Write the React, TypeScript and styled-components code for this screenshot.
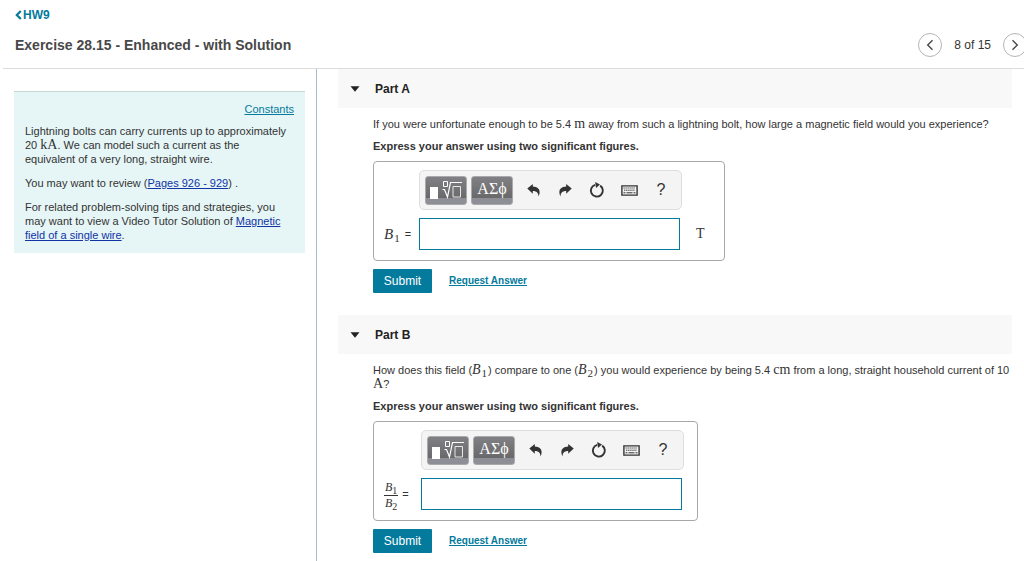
import React from "react";
import styled, { createGlobalStyle } from "styled-components";

const GlobalStyle = createGlobalStyle`
  *, *::before, *::after { box-sizing: border-box; }
  body {
    margin: 0;
    background: #fff;
    color: #333;
    font: 11px/14px "Liberation Sans", Arial, sans-serif;
  }
  p, h1, h2 { margin: 0; }
  button { font-family: inherit; cursor: pointer; }
`;

const Page = styled.div`
  min-height: 100vh;
  display: flex;
  flex-direction: column;
`;

const Header = styled.header`
  margin-left: 3px;
  padding: 8px 0 11px 12px;
  border-bottom: 1px solid #dcdcdc;
  overflow: hidden;
`;

const BackLink = styled.a`
  display: inline-flex;
  align-items: center;
  gap: 1px;
  color: #047a9c;
  font-size: 12px;
  font-weight: bold;
  text-decoration: none;
`;

const TitleRow = styled.div`
  display: flex;
  align-items: center;
  justify-content: space-between;
  margin-top: 10px;
`;

const Title = styled.h1`
  color: #484848;
  font-size: 14px;
  line-height: 24px;
`;

const Pager = styled.nav`
  display: flex;
  align-items: center;
  gap: 12px;
  margin-right: -3px;
  font-size: 12px;
`;

const PageButton = styled.button`
  display: flex;
  align-items: center;
  justify-content: center;
  width: 24px;
  height: 24px;
  padding: 0;
  border: 1px solid #b5b5b5;
  border-radius: 50%;
  background: #fff;
  color: #484848;
`;

const Body = styled.div`
  flex: 1;
  display: flex;
`;

const Sidebar = styled.aside`
  flex: 0 0 317px;
  padding: 22px 11px 22px 14px;
  border-right: 1px solid #a6bcd0;
`;

const Problem = styled.section`
  display: flex;
  flex-direction: column;
  gap: 10px;
  padding: 10px 11px 11px;
  border-top: 1px solid #c9d6d6;
  background: #e6f6f7;
  & p { padding-right: 6px; }
`;

const ConstantsLink = styled.a`
  align-self: flex-end;
  margin-bottom: -2px;
  color: #047a9c;
`;

const TextLink = styled.a`
  color: #1033a6;
`;

const Main = styled.main`
  flex: 1;
  min-width: 0;
  padding: 0 12px 0 21px;
`;

const Part = styled.section`
  padding-bottom: 22px;
  &:last-child { padding-bottom: 8px; }
`;

const PartHeader = styled.h2`
  display: flex;
  align-items: center;
  gap: 15px;
  height: 39px;
  padding-left: 12px;
  background: #f8f8f8;
  color: #222;
  font-size: 12px;
`;

const PartContent = styled.div`
  display: flex;
  flex-direction: column;
  align-items: flex-start;
  gap: 8px;
  padding: 9px 0 0 35px;
`;

const Question = styled.p`
  margin-right: -3px;
`;

const Instruction = styled.p`
  font-weight: bold;
`;

const Roman = styled.span`
  font-family: "Liberation Serif", "Times New Roman", serif;
  font-size: 14px;
  line-height: 12px;
`;

const Variable = styled(Roman)`
  font-style: italic;
  & sub {
    margin: 0 1px;
    font-size: 11px;
    font-style: normal;
    line-height: 1px;
    vertical-align: -3px;
  }
`;

const AnswerBox = styled.div<{ $labelWidth: number }>`
  display: grid;
  grid-template-columns: ${(p) => p.$labelWidth}px 263px auto;
  row-gap: 8px;
  align-items: center;
  padding: 8px 13px 10px 10px;
  border: 1px solid #a8a8a8;
  border-radius: 4px;
`;

const Toolbar = styled.div`
  grid-column: 2;
  display: flex;
  align-items: center;
  height: 40px;
  padding: 0 4px 0 5px;
  border: 1px solid #dedede;
  border-radius: 5px;
  background: #f4f4f4;
`;

const PaletteButton = styled.button`
  display: flex;
  align-items: center;
  justify-content: center;
  width: 42px;
  height: 29px;
  margin-right: 4px;
  padding: 0 0 2px;
  border: 1px solid #a9a9ac;
  border-radius: 3px;
  background: linear-gradient(#818185, #69696b 78%, #8e8e96 79%, #8e8e96);
  color: #fff;
  font: 16px/20px "Liberation Serif", "Times New Roman", serif;
`;

const ToolButton = styled.button`
  display: flex;
  align-items: center;
  justify-content: center;
  width: 32px;
  height: 28px;
  padding: 0;
  border: 0;
  background: none;
  color: #333;
  font-size: 16px;
`;

const AnswerLabel = styled.label`
  grid-column: 1;
  display: flex;
  align-items: center;
  gap: 4px;
`;

const LabelMath = styled(Variable)`
  font-size: 15px;
`;

const Fraction = styled.span`
  display: inline-flex;
  flex-direction: column;
  align-items: center;
  gap: 1px;
  & ${Variable} { font-size: 12px; }
  & sub { margin: 0; font-size: 10px; }
`;

const Numerator = styled.span`
  padding: 0 1px 1px;
  border-bottom: 1px solid #333;
`;

const AnswerInput = styled.input`
  width: 261px;
  height: 32px;
  padding: 0 6px;
  border: 1px solid #047a9c;
  background: #fff;
  font-size: 14px;
`;

const Unit = styled(Roman)`
  padding: 0 6px 0 14px;
`;

const Actions = styled.div`
  display: flex;
  align-items: center;
  gap: 17px;
`;

const SubmitButton = styled.button`
  width: 59px;
  height: 24px;
  padding: 0;
  border: 0;
  border-radius: 1px;
  background: #047a9c;
  color: #fff;
  font-size: 12px;
`;

const RequestLink = styled.a`
  color: #047a9c;
  font-size: 10px;
  font-weight: bold;
`;

const Chevron = ({ flip = false }: { flip?: boolean }) => (
  <svg width="8" height="12" viewBox="0 0 8 12" fill="none" stroke="currentColor" strokeWidth="1.4" aria-hidden="true">
    <path d={flip ? "M1.5 1.2 6.3 6 1.5 10.8" : "M6.5 1.2 1.7 6 6.5 10.8"} />
  </svg>
);

const BackIcon = () => (
  <svg width="7" height="10" viewBox="0 0 7 10" fill="none" stroke="currentColor" strokeWidth="2.2" aria-hidden="true">
    <path d="M5.8 .9 1.8 5l4 4.1" />
  </svg>
);

const CaretIcon = () => (
  <svg width="10" height="6" viewBox="0 0 10 6" aria-hidden="true">
    <path d="M.5 .3h9L5 5.7Z" fill="#222" />
  </svg>
);

const TemplateIcon = () => (
  <svg width="34" height="20" viewBox="0 0 34 20" fill="none" stroke="#fff" aria-hidden="true">
    <rect x="1" y="8" width="8" height="12" fill="#fff" stroke="none" />
    <path d="M14.5 2.5h4v5h-4z" />
    <path d="M13.5 10.5h2l3 7.5L21.5 3.5H33" strokeWidth="1.2" />
    <path d="M24 7.5h7.5v10.5H24z" stroke="#e6e6e6" />
  </svg>
);

const ArrowIcon = ({ flip = false }: { flip?: boolean }) => (
  <svg width="13" height="13" viewBox="0 0 13 13" fill="currentColor" aria-hidden="true">
    <path
      transform={flip ? "translate(13 0) scale(-1 1)" : undefined}
      d="M.3 4.6 5.8 .1v2.5c4.5 .2 6.8 2.3 6.8 5.6 0 1.6-.5 3.1-1.2 4.2 .1-3.4-1.5-5.2-5.6-5.3v2.7Z"
    />
  </svg>
);

const ResetIcon = () => (
  <svg width="16" height="16" viewBox="0 0 16 16" aria-hidden="true">
    <path d="M11.2 3.6a6 6 0 1 1-5-.8" fill="none" stroke="currentColor" strokeWidth="1.9" />
    <path d="M6.2 0 11 2.6 7 6Z" fill="currentColor" />
  </svg>
);

const KeyboardIcon = () => (
  <svg width="17" height="11" viewBox="0 0 17 11" fill="none" stroke="currentColor" aria-hidden="true">
    <path d="M.9 .9h15.2v9.2H.9z" strokeWidth="1.4" />
    <path d="M2.5 3h12" strokeDasharray="1.2 .8" />
    <path d="M3 5.2h11" strokeDasharray="1.4 .7" />
    <path d="M2.5 7.8h2m1 0h6m1 0h2" />
  </svg>
);

interface AnswerProps {
  id: string;
  labelWidth: number;
  label: React.ReactNode;
  unit?: string;
}

const Answer = ({ id, labelWidth, label, unit }: AnswerProps) => (
  <>
    <AnswerBox $labelWidth={labelWidth}>
      <Toolbar role="toolbar" aria-label="Math tools">
        <PaletteButton aria-label="Templates"><TemplateIcon /></PaletteButton>
        <PaletteButton aria-label="Symbols">ΑΣϕ</PaletteButton>
        <ToolButton aria-label="Undo"><ArrowIcon /></ToolButton>
        <ToolButton aria-label="Redo"><ArrowIcon flip /></ToolButton>
        <ToolButton aria-label="Reset"><ResetIcon /></ToolButton>
        <ToolButton aria-label="Keyboard shortcuts"><KeyboardIcon /></ToolButton>
        <ToolButton aria-label="Help">?</ToolButton>
      </Toolbar>
      <AnswerLabel htmlFor={id}>{label} =</AnswerLabel>
      <AnswerInput id={id} type="text" />
      {unit && <Unit>{unit}</Unit>}
    </AnswerBox>
    <Actions>
      <SubmitButton>Submit</SubmitButton>
      <RequestLink href="#request">Request Answer</RequestLink>
    </Actions>
  </>
);

const B1 = () => <>B<sub>1</sub></>;
const B2 = () => <>B<sub>2</sub></>;

export default function App() {
  return (
    <Page>
      <GlobalStyle />
      <Header>
        <BackLink href="#hw9"><BackIcon />HW9</BackLink>
        <TitleRow>
          <Title>Exercise 28.15 - Enhanced - with Solution</Title>
          <Pager aria-label="Exercises">
            <PageButton aria-label="Previous"><Chevron /></PageButton>
            <span>8 of 15</span>
            <PageButton aria-label="Next"><Chevron flip /></PageButton>
          </Pager>
        </TitleRow>
      </Header>
      <Body>
        <Sidebar>
          <Problem>
            <ConstantsLink href="#constants">Constants</ConstantsLink>
            <p>
              Lightning bolts can carry currents up to approximately 20 <Roman>kA</Roman>. We can model such a
              current as the equivalent of a very long, straight wire.
            </p>
            <p>You may want to review (<TextLink href="#pages">Pages 926 - 929</TextLink>) .</p>
            <p>
              For related problem-solving tips and strategies, you may want to view a Video Tutor Solution
              of <TextLink href="#video">Magnetic field of a single wire</TextLink>.
            </p>
          </Problem>
        </Sidebar>
        <Main>
          <Part>
            <PartHeader><CaretIcon />Part A</PartHeader>
            <PartContent>
              <Question>
                If you were unfortunate enough to be 5.4 <Roman>m</Roman> away from such a lightning bolt, how
                large a magnetic field would you experience?
              </Question>
              <Instruction>Express your answer using two significant figures.</Instruction>
              <Answer id="answer-a" labelWidth={35} label={<LabelMath><B1 /></LabelMath>} unit="T" />
            </PartContent>
          </Part>
          <Part>
            <PartHeader><CaretIcon />Part B</PartHeader>
            <PartContent>
              <Question>
                How does this field (<Variable><B1 /></Variable>) compare to one (<Variable><B2 /></Variable>) you
                would experience by being 5.4 <Roman>cm</Roman> from a long, straight household current of
                10 <Roman>A</Roman>?
              </Question>
              <Instruction>Express your answer using two significant figures.</Instruction>
              <Answer
                id="answer-b"
                labelWidth={37}
                label={
                  <Fraction>
                    <Numerator><Variable><B1 /></Variable></Numerator>
                    <Variable><B2 /></Variable>
                  </Fraction>
                }
              />
            </PartContent>
          </Part>
        </Main>
      </Body>
    </Page>
  );
}
